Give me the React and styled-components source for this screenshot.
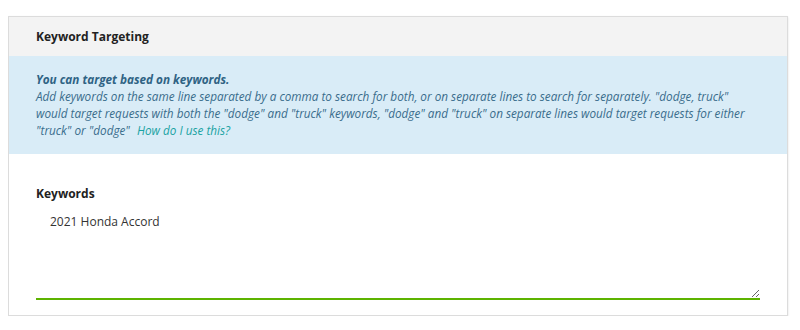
import React, { useEffect, useRef } from "react";
import styled, { createGlobalStyle } from "styled-components";

const GlobalStyle = createGlobalStyle`
  body {
    margin: 8px;
    background: #fff;
    font-family: "Open Sans", "Noto Sans", sans-serif;
  }
`;

const Card = styled.section`
  margin-top: 8px;
  width: 780px;
  box-sizing: border-box;
  background: #fff;
  border: 1px solid #dcdcdc;
  box-shadow: 0 1px 2px rgba(0, 0, 0, 0.12);
`;

const Header = styled.div`
  height: 39px;
  display: flex;
  align-items: center;
  padding: 0 27px;
  background: #f3f3f3;
  font-size: 12px;
  font-weight: 700;
  color: #222;
`;

const Info = styled.div`
  background: #d9ecf7;
  color: #3a6d8c;
  font-style: italic;
  font-size: 11.75px;
  line-height: 17px;
  padding: 15px 27px 15px;
  strong {
    font-weight: 700;
    color: #2f6384;
    display: block;
  }
  a {
    color: #1aa3a3;
    text-decoration: none;
    margin-left: 4px;
  }
`;

const Body = styled.div`
  padding: 31px 27px 15px;
`;

const Label = styled.label`
  display: block;
  font-size: 12px;
  font-weight: 700;
  color: #222;
  line-height: 17px;
  margin-bottom: 4px;
`;

const TextArea = styled.textarea`
  display: block;
  width: 100%;
  height: 94px;
  box-sizing: border-box;
  border: none;
  border-bottom: 2px solid #5db300;
  padding: 7px 14px;
  font-family: "Open Sans", "Noto Sans", sans-serif;
  font-size: 12px;
  line-height: 18px;
  color: #333;
  background: #fff;
  outline: none;
  caret-color: #222;
`;

export default function App() {
  const ref = useRef(null);
  useEffect(() => {
    const el = ref.current;
    if (el) {
      el.focus();
      el.setSelectionRange(el.value.length, el.value.length);
    }
  }, []);

  return (
    <>
      <GlobalStyle />
      <Card>
        <Header>Keyword Targeting</Header>
        <Info>
          <strong>You can target based on keywords.</strong>
          Add keywords on the same line separated by a comma to search for both, or on separate
          lines to search for separately. "dodge, truck" would target requests with both the
          "dodge" and "truck" keywords, "dodge" and "truck" on separate lines would target
          requests for either "truck" or "dodge" <a href="#">How do I use this?</a>
        </Info>
        <Body>
          <Label htmlFor="keywords">Keywords</Label>
          <TextArea id="keywords" ref={ref} defaultValue="2021 Honda Accord" />
        </Body>
      </Card>
    </>
  );
}
